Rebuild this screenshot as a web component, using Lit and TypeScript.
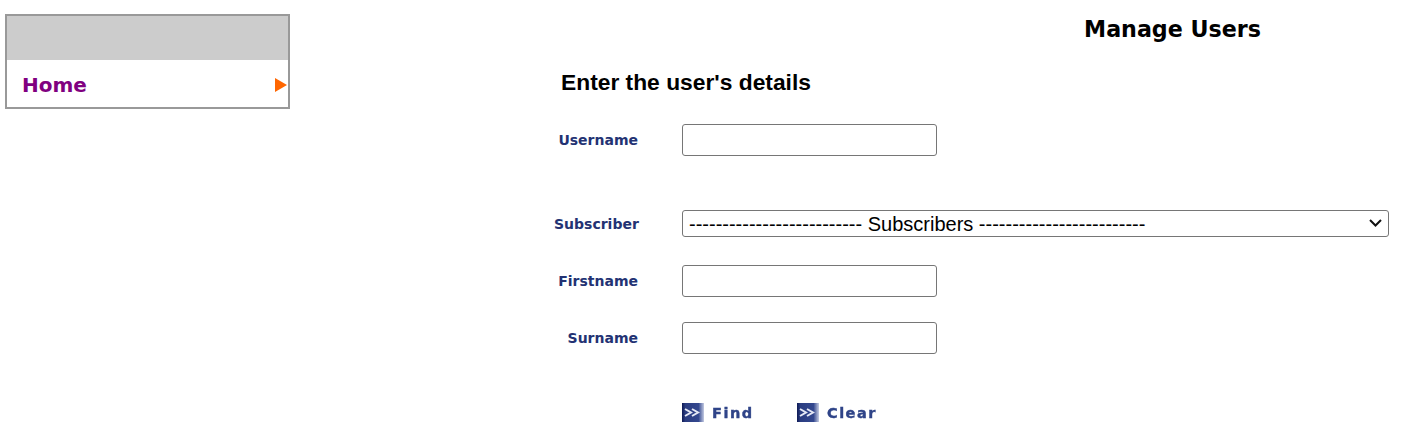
import { LitElement, html, css } from "lit";
import { customElement } from "lit/decorators.js";

@customElement("app-root")
export class AppRoot extends LitElement {
  static styles = css`
    :host { display: block; width: 1401px; height: 438px; overflow: hidden; background: #fff; font-family: "Liberation Sans", Arial, sans-serif; }
    .page { display: flex; align-items: flex-start; padding: 14px 12px 0 5px; box-sizing: border-box; }
    .menu { width: 285px; height: 95px; flex: none; box-sizing: border-box; border: 2px solid #999; display: flex; flex-direction: column; }
    .menu-head { height: 44px; background: #ccc; flex: none; }
    .menu-item { flex: 1; display: flex; align-items: center; justify-content: space-between; padding: 2px 1px 0 15px; }
    .home { font: bold 20px "DejaVu Sans", Verdana, sans-serif; color: #800080; }
    .arrow { width: 12px; height: 14px; display: block; margin-top: 0; }
    .main { flex: 1; padding-left: 264px; min-width: 0; }
    h1 { margin: 2px 0 0; font: bold 22.2px "DejaVu Sans", Verdana, sans-serif; color: #000; text-align: center; padding-left: 402px; line-height: 26px; }
    h2 { margin: 27px 0 0 7px; font: bold 22.8px/26px "Liberation Sans", Arial, sans-serif; color: #000; }
    .form { display: grid; grid-template-columns: 84px 1fr; column-gap: 44px; margin-top: 29px; align-items: center; }
    label { font: bold 14px "DejaVu Sans", Verdana, sans-serif; color: #233273; text-align: right; }
    input, select { box-sizing: border-box; border: 1px solid #767676; border-radius: 3px; background: #fff; margin: 0; padding: 0; }
    input { width: 255px; height: 32px; display: block; }
    .select-wrap { position: relative; width: 707px; height: 27px; }
    select { appearance: none; -webkit-appearance: none; width: 100%; height: 100%; display: block; font: 20px "Liberation Sans", Arial, sans-serif; color: #000; padding-left: 6px; }
    .chev { position: absolute; right: 7px; top: 9px; width: 13px; height: 8px; pointer-events: none; }
    .r1 { margin-bottom: 54px; }
    .r2 { margin-bottom: 28px; }
    .r3 { margin-bottom: 25px; }
    .r4 { margin-bottom: 49px; }
    .buttons { grid-column: 2; display: flex; gap: 93px; }
    .btn { display: flex; align-items: center; gap: 8px; height: 19px; width: 22px; background: none; border: 0; padding: 0; white-space: nowrap; }
    .btn svg { width: 22px; height: 19px; display: block; flex: none; }
    .btn span { font: bold 14.5px "DejaVu Sans", Verdana, sans-serif; letter-spacing: 1.5px; color: #2f4488; -webkit-text-stroke: 0.4px #2f4488; filter: blur(0.5px); }
  `;

  private btn(label: string) {
    return html`<button class="btn" type="button">
      <svg viewBox="0 0 22 19">
        <defs><linearGradient id="g${label}" x1="0" x2="1" y1="0" y2="0">
          <stop offset="0" stop-color="#0e1a55"/><stop offset=".15" stop-color="#2a3c80"/><stop offset=".75" stop-color="#34488f"/><stop offset="1" stop-color="#c4cbe2"/>
        </linearGradient></defs>
        <rect width="22" height="19" fill="url(#g${label})"/>
        <path d="M3 6l6 3.5L3 13M10 6l6 3.5L10 13" fill="none" stroke="#e6e9f5" stroke-width="2"/>
      </svg>
      <span>${label}</span>
    </button>`;
  }

  render() {
    return html`<div class="page">
      <nav class="menu">
        <div class="menu-head"></div>
        <div class="menu-item">
          <span class="home">Home</span>
          <svg class="arrow" viewBox="0 0 12 14"><path d="M0 0L12 7L0 14Z" fill="#f60"/></svg>
        </div>
      </nav>
      <main class="main">
        <h1>Manage Users</h1>
        <h2>Enter the user's details</h2>
        <form class="form">
          <label class="r1">Username</label><input class="r1" type="text" />
          <label class="r2">Subscriber</label>
          <div class="select-wrap r2">
            <select><option>-------------------------- Subscribers -------------------------</option></select>
            <svg class="chev" viewBox="0 0 13 8"><path d="M1 1l5.5 5.5L12 1" fill="none" stroke="#111" stroke-width="2"/></svg>
          </div>
          <label class="r3">Firstname</label><input class="r3" type="text" />
          <label class="r4">Surname</label><input class="r4" type="text" />
          <div class="buttons">${this.btn("Find")}${this.btn("Clear")}</div>
        </form>
      </main>
    </div>`;
  }
}
